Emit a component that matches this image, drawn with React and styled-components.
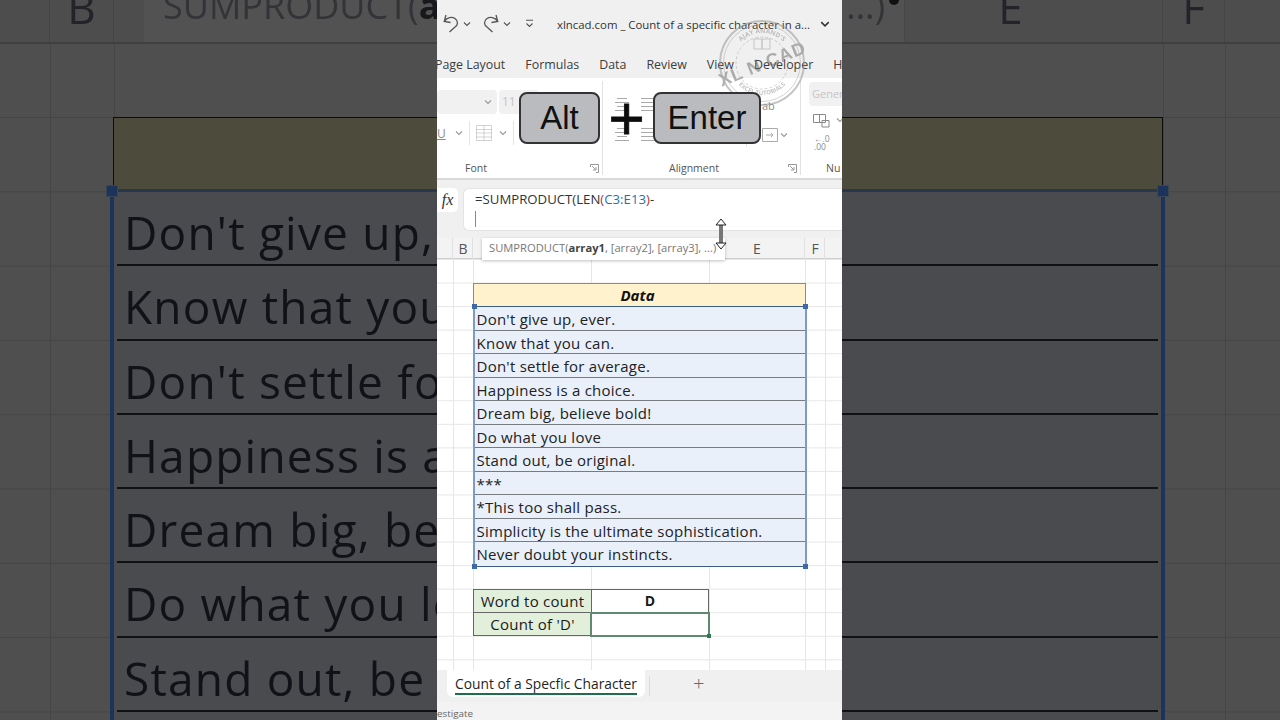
import React from "react";
import styled, { createGlobalStyle } from "styled-components";

const Global = createGlobalStyle`
  html, body { margin: 0; padding: 0; background: #4f4f4f; }
  * { box-sizing: border-box; }
`;

const UI = `"Open Sans", "Noto Sans", sans-serif`;
const CELL = `"Open Sans", "Lato", sans-serif`;

const quotes = [
  "Don't give up, ever.",
  "Know that you can.",
  "Don't settle for average.",
  "Happiness is a choice.",
  "Dream big, believe bold!",
  "Do what you love",
  "Stand out, be original.",
  "***",
  "*This too shall pass.",
  "Simplicity is the ultimate sophistication.",
  "Never doubt your instincts.",
];

const Stage = styled.div`
  display: grid;
  width: 1280px;
  height: 720px;
  overflow: hidden;
  font-family: ${UI};
  > * { grid-area: 1 / 1; }
`;

/* ---------- dimmed, magnified backdrop ---------- */
const Backdrop = styled.div`
  width: 1280px;
  height: 720px;
  background: #4f4f4f;
  filter: blur(0.5px);
  overflow: hidden;
`;
const BigHeader = styled.div`
  display: grid;
  grid-template-columns: 50px 64px 745px 304px 62px 55px;
  height: 44px;
  background: #4d4d4d;
  border-bottom: 2px solid #404040;
  color: #23232a;
  font-size: 44px;
  line-height: 44px;
`;
const BigLetter = styled.div`
  text-align: center;
  margin-top: -15px;
  padding-top: 0;
  border-right: 1px solid #454545;
`;
const BigTip = styled.div`
  position: relative;
  margin-left: 30px;
  width: 761px;
  height: 42px;
  padding-left: 19px;
  background: #525252;
  border-right: 1px solid #474747;
  color: #343438;
  font-size: 36px;
  line-height: 42px;
  word-spacing: -3px;
  white-space: nowrap;
  overflow: hidden;
  > div { margin-top: -15px; }
  b { color: #18181c; }
  &::after {
    content: "";
    position: absolute;
    right: 5px;
    top: 0;
    width: 10px;
    height: 5px;
    border-radius: 0 0 5px 5px;
    background: #111;
  }
`;
const BigGrid = styled.div`
  height: 676px;
  padding: 73px 0 0 113px;
  background:
    linear-gradient(#454545, #454545) 50px 0 / 1px 100% no-repeat,
    linear-gradient(#454545, #454545) 114px 0 / 1px 100% no-repeat,
    linear-gradient(#454545, #454545) 1163px 0 / 1px 100% no-repeat,
    linear-gradient(#454545, #454545) 1225px 0 / 1px 100% no-repeat,
    linear-gradient(#454545 1px, transparent 1px) 0 73px / 100% 74.3px;
`;
const BigTitle = styled.div`
  width: 1050px;
  height: 72px;
  background: #4d4c3c;
  border: 1px solid #0d0d0d;
  border-bottom: 0;
`;
const BigRows = styled.div`
  position: relative;
  width: 1055px;
  margin-left: -3px;
  background: #494b4f;
  border-left: 4px solid #1c345c;
  border-right: 4px solid #1c345c;
  border-top: 3px solid #27384a;
`;
const BigRow = styled.div`
  height: 74.3px;
  margin: 0 3px;
  padding-left: 7px;
  border-bottom: 2px solid #101113;
  color: #101218;
  font-family: ${CELL};
  font-size: 46px;
  letter-spacing: 1.2px;
  line-height: 80px;
  white-space: nowrap;
`;
const BigHandle = styled.span`
  position: absolute;
  top: -7px;
  ${(p) => (p.$right ? "right: -8px;" : "left: -8px;")}
  width: 12px;
  height: 12px;
  background: #1c345c;
  border: 1px solid #3a4652;
`;

/* ---------- centre window ---------- */
const Pane = styled.div`
  position: relative;
  justify-self: start;
  margin-left: 437px;
  width: 405px;
  height: 720px;
  display: flex;
  flex-direction: column;
  background: #f0f0f0;
  overflow: hidden;
  color: #3a3a3a;
`;
const TitleBar = styled.div`
  height: 46px;
  display: flex;
  align-items: center;
  padding: 2px 0 0 6px;
  flex: none;
`;
const TitleText = styled.div`
  font-size: 11.4px;
  color: #333;
  margin-left: 23px;
  white-space: nowrap;
  width: 263px;
`;
const IconGroup = styled.div`
  display: flex;
  align-items: center;
  margin-top: -1px;
  margin-right: ${(p) => p.$gap || 0}px;
  gap: 4px;
`;
const Menu = styled.div`
  height: 32px;
  display: flex;
  align-items: center;
  gap: 20px;
  margin-left: -2px;
  font-size: 12.4px;
  color: #3d3d3d;
  white-space: nowrap;
  padding-top: 4px;
  flex: none;
`;
const Ribbon = styled.div`
  height: 102px;
  flex: none;
  background: #fff;
  border-bottom: 2px solid #d9d9d9;
  display: flex;
  padding-top: 3px;
  overflow: hidden;
`;
const RibbonGroup = styled.div`
  position: relative;
  width: ${(p) => p.$w}px;
  flex: none;
  height: 94px;
  border-right: ${(p) => (p.$last ? "0" : "1px solid #e2e2e2")};
  display: flex;
  flex-direction: column;
`;
const ToolRow = styled.div`
  display: flex;
  align-items: center;
  height: ${(p) => p.$h}px;
  margin-top: ${(p) => p.$top || 0}px;
  padding-left: ${(p) => p.$pad || 0}px;
  flex: none;
`;
const Gap = styled.span`
  display: block;
  width: ${(p) => p.$w}px;
  flex: none;
`;
const Combo = styled.div`
  width: ${(p) => p.$w}px;
  height: 24px;
  flex: none;
  background: #f1f1f1;
  border-radius: 4px;
  color: #c4c4c4;
  font-size: ${(p) => p.$size || 11.5}px;
  line-height: 24px;
  padding: 0 5px 0 3px;
  display: flex;
  justify-content: ${(p) => (p.$end ? "flex-end" : "flex-start")};
  align-items: center;
  white-space: nowrap;
  overflow: hidden;
`;
const ToolSep = styled.i`
  display: block;
  width: 1px;
  height: 24px;
  background: #e4e4e4;
  flex: none;
`;
const GroupLabel = styled.div`
  position: absolute;
  bottom: 0;
  left: ${(p) => p.$left}px;
  font-size: 10.5px;
  line-height: 14px;
  color: #555;
`;
const Launcher = styled.svg`
  position: absolute;
  right: 3px;
  bottom: 2px;
`;
const Underlined = styled.span`
  display: block;
  width: 8px;
  font-size: 12px;
  color: #8a8a8a;
  text-decoration: underline;
`;
const WrapLabel = styled.span`
  font-size: 11px;
  color: #8d8d8d;
`;
const DecimalIcon = styled.div`
  font-size: 8.5px;
  line-height: 8px;
  color: #8c8c8c;
  white-space: pre;
`;
const FormulaBar = styled.div`
  flex: none;
  height: 58px;
  padding-top: 8px;
  display: flex;
  gap: 5px;
`;
const FxBox = styled.div`
  width: 21px;
  height: 24px;
  background: #fff;
  border-radius: 0 5px 5px 0;
  font: italic 16px "Liberation Serif", serif;
  color: #333;
  text-align: center;
  line-height: 23px;
`;
const FormulaBox = styled.div`
  flex: 1;
  height: 43px;
  background: #fff;
  border: 1px solid #e4e4e4;
  border-right: 0;
  border-radius: 6px 0 0 6px;
  padding: 2px 0 0 11px;
  font-size: 13.2px;
  line-height: 16px;
  color: #333;
  white-space: nowrap;
`;
const Paren = styled.span`
  color: ${(p) => p.$c};
`;
const Caret = styled.i`
  display: block;
  width: 1px;
  height: 16px;
  margin-top: 4px;
  background: #888;
`;
const ColumnHeads = styled.div`
  flex: none;
  height: 21px;
  display: grid;
  grid-template-columns: 16px 20px 118px 118px 96px 20px 17px;
  background: #f3f3f3;
  border-bottom: 1px solid #cfcfcf;
  font-size: 14px;
  line-height: 22px;
  color: #555;
`;
const ColHead = styled.div`
  text-align: center;
  padding-left: 1px;
  border-right: 1px solid #e0e0e0;
`;
const Sheet = styled.div`
  flex: none;
  height: 411px;
  padding: 23.5px 0 0 36px;
  background:
    linear-gradient(#e6e6e6, #e6e6e6) 15.5px 0 / 1px 100% no-repeat,
    linear-gradient(#e6e6e6, #e6e6e6) 35.5px 0 / 1px 100% no-repeat,
    linear-gradient(#e6e6e6, #e6e6e6) 154px 0 / 1px 100% no-repeat,
    linear-gradient(#e6e6e6, #e6e6e6) 272px 0 / 1px 100% no-repeat,
    linear-gradient(#e6e6e6, #e6e6e6) 368px 0 / 1px 100% no-repeat,
    linear-gradient(#e6e6e6, #e6e6e6) 388px 0 / 1px 100% no-repeat,
    linear-gradient(#e6e6e6 1px, transparent 1px) 0 0 / 100% 23.55px,
    #fff;
  color: #1a1a1a;
`;
const DataTitle = styled.div`
  width: 333px;
  height: 23.5px;
  padding-right: 4px;
  background: #fff2cc;
  border: 1px solid #8a8a8a;
  border-bottom: 0;
  text-align: center;
  font: italic 700 15px/23px ${CELL};
  color: #111;
`;
const DataRows = styled.div`
  position: relative;
  width: 334px;
  margin-left: -0.5px;
  border: 2px solid #7c9bc6;
  border-top: 1px solid #3c5d88;
  border-bottom: 1px solid #3c5d88;
`;
const DataRow = styled.div`
  height: 23.55px;
  padding-left: 2px;
  background: #e9f0fa;
  border-bottom: 1px solid #777c80;
  font: 15px/24px ${CELL};
  letter-spacing: 0.25px;
  color: #222;
  white-space: nowrap;
  &:last-child { border-bottom: 0; }
`;
const Handle = styled.span`
  position: absolute;
  width: 5px;
  height: 5px;
  background: #3f6aa8;
  ${(p) => (p.$bottom ? "bottom: -3px;" : "top: -3px;")}
  ${(p) => (p.$right ? "right: -3px;" : "left: -3px;")}
`;
const CountTable = styled.div`
  display: grid;
  grid-template-columns: 118px 118px;
  grid-auto-rows: 23.55px;
  margin-top: 22px;
  width: 236px;
`;
const LabelCell = styled.div`
  background: #e2efda;
  border: 1px solid #666;
  border-right: 0;
  border-top: ${(p) => (p.$second ? "0" : "1px solid #666")};
  text-align: center;
  font: 15px/22px ${CELL};
  letter-spacing: 0.25px;
`;
const ValueCell = styled.div`
  background: #fff;
  border: 1px solid #666;
  border-top: ${(p) => (p.$second ? "0" : "1px solid #666")};
  text-align: center;
  font: 700 14px/22px ${CELL};
`;
const ActiveCell = styled.div`
  position: relative;
  background: #fff;
  margin: -1px;
  border: 2px solid #5f8a72;
  &::after {
    content: "";
    position: absolute;
    right: -3px;
    bottom: -3px;
    width: 4px;
    height: 4px;
    background: #2f7a52;
  }
`;
const TabBar = styled.div`
  flex: none;
  height: 32px;
  display: flex;
  align-items: flex-start;
  background: #f0f0f0;
  padding-left: 10px;
`;
const SheetTab = styled.div`
  width: 198px;
  height: 27px;
  background: #fff;
  border-radius: 0 0 6px 6px;
  padding: 4px 8px 0;
  font-size: 13.8px;
  font-weight: 500;
  color: #1f1f1f;
  white-space: nowrap;
`;
const TabLabel = styled.span`
  display: block;
  height: 21px;
  line-height: 20px;
  border-bottom: 2px solid #1d6f4a;
`;
const TabSep = styled.i`
  display: block;
  width: 1px;
  height: 20px;
  margin: 6px 0 0 4px;
  background: #dcdcdc;
`;
const AddTab = styled.div`
  margin: 4px 0 0 43px;
  font-size: 20px;
  line-height: 20px;
  font-weight: 300;
  color: #666;
`;
const StatusBar = styled.div`
  flex: 1;
  background: #f3f3f3;
  font-size: 9.8px;
  line-height: 24px;
  color: #666;
`;

/* ---------- overlays ---------- */
const KeysOverlay = styled.div`
  position: absolute;
  left: 82px;
  top: 92px;
  display: flex;
  align-items: center;
`;
const Key = styled.div`
  width: ${(p) => p.$w}px;
  height: 52px;
  background: #b9bbbe;
  border: 2px solid #333;
  border-radius: 8px;
  font: 33px/47px "Liberation Sans", sans-serif;
  color: #111;
  text-align: center;
`;
const Plus = styled.div`
  width: 53px;
  text-align: center;
  font: 400 62px/52px "Liberation Sans", sans-serif;
  -webkit-text-stroke: 0.8px #0c0c0c;
  color: #0c0c0c;
`;
const Stamp = styled.svg`
  position: absolute;
  left: 281px;
  top: 19px;
  opacity: 0.5;
  overflow: visible;
`;
const Tip = styled.div`
  position: absolute;
  left: 45px;
  top: 238px;
  width: 243px;
  height: 22px;
  background: #fff;
  box-shadow: 0 1px 3px rgba(0, 0, 0, 0.25);
  padding-left: 7px;
  font-size: 11.2px;
  line-height: 20px;
  color: #777;
  white-space: nowrap;
  b { color: #444; }
`;
const Cursor = styled.svg`
  position: absolute;
  left: 277px;
  top: 218px;
`;

const Chevron = ({ size = 8, color = "#999", w = 1.1 }) => (
  <svg width={size} height={size} viewBox="0 0 8 8" fill="none" stroke={color} strokeWidth={w}>
    <path d="M1 2.5 L4 5.5 L7 2.5" />
  </svg>
);

const LinesIcon = ({ w = 14, inset = 0 }) => (
  <svg width={w} height="16" viewBox={`0 0 ${w} 16`} stroke="#aaa" strokeWidth="1">
    <path d={`M${inset} 1.5H${w - inset} M0 5.5H${w} M${inset} 9.5H${w - inset} M0 13.5H${w}`} />
  </svg>
);

const LauncherIcon = () => (
  <Launcher width="9" height="9" viewBox="0 0 9 9" fill="none" stroke="#999">
    <path d="M.5 3V.5H8.5V8.5H6 M2 2L6 6 M6 3V6H3" />
  </Launcher>
);

export default function App() {
  return (
    <Stage>
      <Global />
      <Backdrop>
        <BigHeader>
          <BigLetter />
          <BigLetter>B</BigLetter>
          <div>
            <BigTip>
              <div>SUMPRODUCT(<b>array1</b>, [array2], [array3], ...)</div>
            </BigTip>
          </div>
          <BigLetter>E</BigLetter>
          <BigLetter>F</BigLetter>
          <div />
        </BigHeader>
        <BigGrid>
          <BigTitle />
          <BigRows>
            <BigHandle />
            <BigHandle $right />
            {quotes.slice(0, 8).map((q) => (
              <BigRow key={q}>{q}</BigRow>
            ))}
          </BigRows>
        </BigGrid>
      </Backdrop>

      <Pane>
        <TitleBar>
          <IconGroup $gap={12}>
            <svg width="16" height="19" viewBox="0 0 16 19" fill="none" stroke="#555" strokeWidth="1.3">
              <path d="M3 1 L1.2 7.5 L7.5 8.5 M1.5 7.2 C4 3 9 2.5 12 4.5 C15.5 7 15 11 12 13 L6.5 18" />
            </svg>
            <Chevron color="#555" />
          </IconGroup>
          <IconGroup $gap={14}>
            <svg width="16" height="19" viewBox="0 0 16 19" fill="none" stroke="#555" strokeWidth="1.3">
              <path d="M13 1 L14.8 7.5 L8.5 8.5 M14.5 7.2 C12 3 7 2.5 4 4.5 C.5 7 1 11 4 13 L9.5 18" />
            </svg>
            <Chevron color="#555" />
          </IconGroup>
          <IconGroup>
            <svg width="9" height="9" viewBox="0 0 9 9" fill="none" stroke="#555" strokeWidth="1.1">
              <path d="M1 1.2H8 M1.5 4.5 L4.5 7.5 L7.5 4.5" />
            </svg>
          </IconGroup>
          <TitleText>xlncad.com _ Count of a specific character in a...</TitleText>
          <IconGroup>
            <Chevron size={10} color="#333" w={1.2} />
          </IconGroup>
        </TitleBar>

        <Menu>
          <span>Page Layout</span>
          <span>Formulas</span>
          <span>Data</span>
          <span>Review</span>
          <span>View</span>
          <span>Developer</span>
          <span>H</span>
        </Menu>

        <Ribbon>
          <RibbonGroup $w={166}>
            <ToolRow $h={24} $top={9}>
              <Combo $w={60} $end><Chevron /></Combo>
              <Gap $w={2} />
              <Combo $w={40} $size={12}>11</Combo>
            </ToolRow>
            <ToolRow $h={24} $top={7}>
              <Underlined>U</Underlined>
              <Gap $w={10} />
              <Chevron />
              <Gap $w={6} />
              <ToolSep />
              <Gap $w={6} />
              <svg width="16" height="16" viewBox="0 0 16 16" fill="none" stroke="#aaa">
                <path d="M.5.5H15.5V15.5H.5Z M.5 8H15.5 M8 .5V15.5 M.5 4.5H15.5 M.5 12H15.5" strokeDasharray="1 1" />
              </svg>
              <Gap $w={7} />
              <Chevron />
              <Gap $w={6} />
              <ToolSep />
            </ToolRow>
            <GroupLabel $left={28}>Font</GroupLabel>
            <LauncherIcon />
          </RibbonGroup>
          <RibbonGroup $w={198}>
            <ToolRow $h={20} $top={14} $pad={12}>
              <LinesIcon inset={2} />
              <Gap $w={12} />
              <LinesIcon />
              <Gap $w={107} />
              <WrapLabel>ab</WrapLabel>
            </ToolRow>
            <ToolRow $h={20} $top={10} $pad={12}>
              <LinesIcon inset={2} />
              <Gap $w={12} />
              <LinesIcon />
              <Gap $w={91} />
              <ToolSep />
              <Gap $w={15} />
              <svg width="16" height="16" viewBox="0 0 16 16" fill="none" stroke="#aaa">
                <path d="M.5 1.5H15.5V14.5H.5Z M4 8H11 M9 6L11 8L9 10" />
              </svg>
              <Gap $w={2} />
              <Chevron />
            </ToolRow>
            <GroupLabel $left={66}>Alignment</GroupLabel>
            <LauncherIcon />
          </RibbonGroup>
          <RibbonGroup $w={60} $last>
            <ToolRow $h={24} $top={1} $pad={8}>
              <Combo $w={40} $size={11}>Gener</Combo>
            </ToolRow>
            <ToolRow $h={22} $top={3} $pad={12}>
              <svg width="17" height="15" viewBox="0 0 17 15" fill="none" stroke="#888">
                <path d="M.5 1.5H12.5V9.5H.5Z M6.5 1.5V9.5 M9 7.5H16V14H9Z" />
              </svg>
              <Gap $w={6} />
              <Chevron />
            </ToolRow>
            <ToolRow $h={20} $top={2} $pad={13}>
              <DecimalIcon>{"←.0\n.00"}</DecimalIcon>
            </ToolRow>
            <GroupLabel $left={25}>Nu</GroupLabel>
          </RibbonGroup>
        </Ribbon>

        <FormulaBar>
          <FxBox>fx</FxBox>
          <FormulaBox>
            =SUMPRODUCT(LEN<Paren $c="#b3352c">(</Paren>
            <Paren $c="#1f6fb5">C3:E13</Paren>
            <Paren $c="#b3352c">)</Paren>-
            <Caret />
          </FormulaBox>
        </FormulaBar>

        <ColumnHeads>
          <ColHead />
          <ColHead>B</ColHead>
          <ColHead />
          <ColHead />
          <ColHead>E</ColHead>
          <ColHead>F</ColHead>
          <div />
        </ColumnHeads>

        <Sheet>
          <DataTitle>Data</DataTitle>
          <DataRows>
            <Handle />
            <Handle $right />
            <Handle $bottom />
            <Handle $bottom $right />
            {quotes.map((q) => (
              <DataRow key={q}>{q}</DataRow>
            ))}
          </DataRows>
          <CountTable>
            <LabelCell>Word to count</LabelCell>
            <ValueCell>D</ValueCell>
            <LabelCell $second>Count of 'D'</LabelCell>
            <ActiveCell />
          </CountTable>
        </Sheet>

        <TabBar>
          <SheetTab><TabLabel>Count of a Specfic Character</TabLabel></SheetTab>
          <TabSep />
          <AddTab>+</AddTab>
        </TabBar>
        <StatusBar>estigate</StatusBar>

        <Stamp width="88" height="88" viewBox="0 0 88 88" fill="none">
          <defs>
            <path id="stampTop" d="M14 44 A30 30 0 0 1 74 44" />
            <path id="stampBot" d="M12 44 A32 32 0 0 0 76 44" />
          </defs>
          <circle cx="44" cy="44" r="42" stroke="#8f8f8f" strokeWidth="2" />
          <circle cx="44" cy="44" r="38.5" stroke="#a5a5a5" strokeWidth="1" />
          <circle cx="44" cy="44" r="26" stroke="#a5a5a5" strokeWidth="1" strokeDasharray="3 2" />
          <text fontSize="6.5" fontWeight="700" fill="#8a8a8a" fontFamily="Open Sans">
            <textPath href="#stampTop" startOffset="50%" textAnchor="middle">AJAY ANAND'S</textPath>
          </text>
          <text fontSize="6" fontWeight="700" fill="#8a8a8a" fontFamily="Open Sans">
            <textPath href="#stampBot" startOffset="50%" textAnchor="middle">EXCEL TUTORIALS</textPath>
          </text>
          <path d="M36 20H44V30H36Z M44 20H52V30H44Z" stroke="#9a9a9a" />
          <text x="44" y="51" textAnchor="middle" fontSize="18" fontWeight="700" fill="#666" fontFamily="Liberation Sans" transform="rotate(-22 44 44)" letterSpacing="1">XL N CAD</text>
        </Stamp>

        <Tip>SUMPRODUCT(<b>array1</b>, [array2], [array3], ...)</Tip>

        <KeysOverlay>
          <Key $w={81}>Alt</Key>
          <Plus>+</Plus>
          <Key $w={108}>Enter</Key>
        </KeysOverlay>

        <Cursor width="14" height="32" viewBox="0 0 14 32">
          <rect x="5" y="7" width="4" height="18" fill="#777" />
          <path d="M7 1 L12 7 H2 Z M7 31 L12 25 H2 Z" fill="#fff" stroke="#222" strokeWidth="1" />
        </Cursor>
      </Pane>
    </Stage>
  );
}
